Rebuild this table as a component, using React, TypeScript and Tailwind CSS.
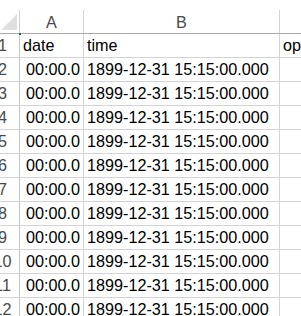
const rows = Array.from({ length: 12 }, (_, i) => i + 1)

export default function App() {
  return (
    <div
      className="w-[301px] h-[316px] overflow-hidden bg-white text-[16.2px]"
      style={{ fontFamily: '"Liberation Sans", Arial, sans-serif' }}
    >
      <div className="ml-[-9px] w-[400px]">
        <div className="h-[10px]" />
        {/* column headers */}
        <div className="flex h-[24px] border-b border-[#ababab] text-[#4a4a4a]">
          <div className="relative w-[29px] shrink-0 border-r border-[#d0d0d0] flex items-end justify-end pr-[2px] pb-[3px]">
            <svg width="16" height="16" viewBox="0 0 16 16">
              <polygon points="16,0 16,16 0,16" fill="#dfdfdf" />
            </svg>
            <span className="absolute right-[-2px] bottom-[-2px] w-[2px] h-[2px] bg-[#217346]" />
          </div>
          <div className="w-[64px] shrink-0 border-r border-[#d4d4d4] text-center pt-[1px] leading-[23px]">
            A
          </div>
          <div className="w-[196px] shrink-0 border-r border-[#d4d4d4] text-center pt-[1px] leading-[23px]">
            B
          </div>
          <div className="w-[100px] shrink-0" />
        </div>
        {rows.map((n) => (
          <div key={n} className="flex h-[24px] border-b border-[#d4d4d4] leading-[23px]">
            <div className="w-[29px] shrink-0 border-r border-[#c6c6c6] text-center pr-[5px] text-[#4a4a4a] whitespace-nowrap">
              {n}
            </div>
            {n === 1 ? (
              <div className="w-[64px] shrink-0 border-r border-[#d4d4d4] pl-[3px] text-black">
                date
              </div>
            ) : (
              <div className="w-[64px] shrink-0 border-r border-[#d4d4d4] text-right pr-[3px] text-black">
                00:00.0
              </div>
            )}
            <div className="w-[196px] shrink-0 border-r border-[#d4d4d4] pl-[3px] text-black whitespace-nowrap overflow-hidden">
              {n === 1 ? "time" : "1899-12-31 15:15:00.000"}
            </div>
            <div className="w-[100px] shrink-0 pl-[3px] text-black whitespace-nowrap">
              {n === 1 ? "op" : ""}
            </div>
          </div>
        ))}
      </div>
    </div>
  )
}
